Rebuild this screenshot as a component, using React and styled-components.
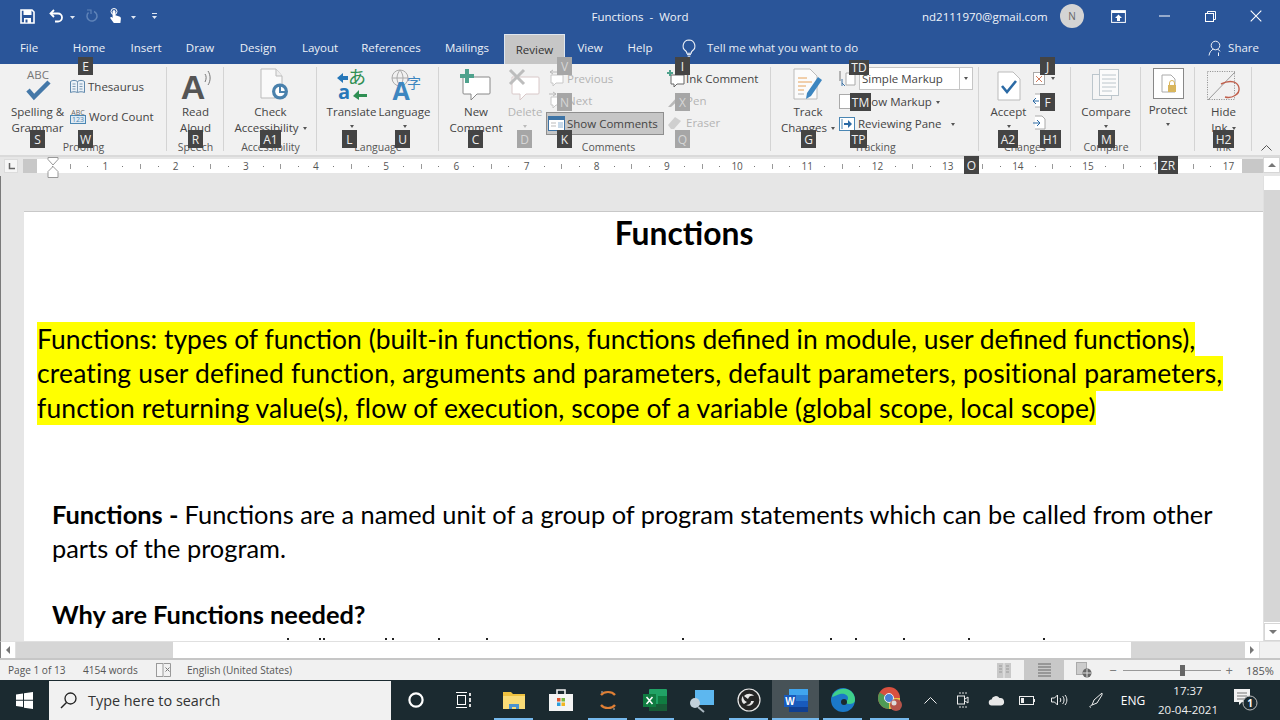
import React from "react";
import styled, { createGlobalStyle } from "styled-components";

const Global = createGlobalStyle`
  html, body { margin: 0; padding: 0; width: 1280px; height: 720px; overflow: hidden; background: #f1f1f1; }
  * { box-sizing: border-box; }
`;

const UI = `"Open Sans", "Noto Sans", "Liberation Sans", sans-serif`;

const Window = styled.div`
  position: relative; width: 1280px; height: 720px; overflow: hidden;
  display: flex; flex-direction: column; font-family: ${UI}; font-size: 11.5px; color: #444;
`;

/* ---------- title bar ---------- */
const TitleBar = styled.header`
  height: 32px; flex: none; background: #2a5599; color: #fff; display: flex; align-items: center;
  font-size: 11.5px; position: relative;
`;
const Quick = styled.div`display: flex; align-items: center; padding-left: 20px; width: 300px; flex: none;`;
const Q = styled.span`display: inline-flex; align-items: center; justify-content: center; width: ${p => p.$w}px; height: 20px; flex: none;`;
const DocTitle = styled.div`flex: 1; text-align: center; margin-left: 58px; white-space: pre; font-size: 11.5px; color: #eef2f8;`;
const Account = styled.div`width: 358px; display: flex; align-items: center; flex: none;`;
const Email = styled.span`font-size: 11.5px; width: 138px; flex: none; color: #f0f4fa; white-space: nowrap;`;
const Avatar = styled.span`
  width: 24px; height: 24px; flex: none; border-radius: 50%; background: #d4d4d4; color: #666; font-size: 10px;
  display: flex; align-items: center; justify-content: center; margin-right: 11px;
`;
const WinBtn = styled.span`width: ${p => p.$w || 46}px; flex: none; display: flex; justify-content: center; align-items: center;`;

/* ---------- tabs ---------- */
const TabBar = styled.nav`height: 32px; flex: none; background: #2a5599; display: flex; align-items: flex-end;`;
const Tab = styled.span`
  width: ${p => p.$w}px; height: ${p => (p.$active ? 30 : 32)}px; display: flex; align-items: center; justify-content: center;
  color: ${p => (p.$active ? "#333" : "#edf1f7")}; font-size: 11.5px; flex: none;
  background: ${p => (p.$active ? "#c6c6c6" : "transparent")};
  padding-bottom: ${p => (p.$active ? 0 : 1)}px;
  ${p => (p.$active ? "border: 1px solid #dfe6ee; border-bottom: 0;" : "")}
`;
const TellMe = styled.div`display: flex; align-items: center; gap: 11px; margin-left: 17px; color: #e8edf5; height: 32px; font-size: 11.5px; flex: 1; padding-bottom: 1px;`;
const Share = styled.div`display: flex; align-items: center; gap: 6px; height: 32px; color: #e8edf5; padding-right: 21px; font-size: 11.5px; padding-bottom: 1px;`;

/* ---------- ribbon ---------- */
const Ribbon = styled.section`height: 93px; flex: none; background: #f1f1f1; display: flex; border-bottom: 2px solid #dadada; position: relative;`;
const Group = styled.div`
  width: ${p => p.$w}px; flex: none; position: relative; display: flex; flex-direction: column; padding-top: 3px;
  &::after { content: ""; position: absolute; right: 0; top: 3px; bottom: 4px; width: 1px; background: #d4d4d4; }
`;
const GroupBody = styled.div`flex: 1; display: flex; align-items: flex-start; justify-content: ${p => p.$j || "flex-start"}; padding-left: ${p => p.$pl || 0}px; min-height: 0;`;
const GroupLabel = styled.div`height: 15px; line-height: 15px; text-align: center; font-size: 10.5px; color: #555; padding-left: ${p => p.$pl || 0}px;`;
const Big = styled.div`
  width: ${p => p.$w}px; flex: none; display: flex; flex-direction: column; align-items: center; text-align: center;
  line-height: 16px; color: ${p => (p.$off ? "#b4b4b4" : "#444")}; white-space: nowrap;
`;
const BigIcon = styled.div`height: ${p => p.$h || 34}px; margin-bottom: 3px; display: flex; align-items: flex-end; justify-content: center;`;
const Caret = styled.span`
  display: inline-block; width: 0; height: 0; border: 2.5px solid transparent; border-top: 3px solid ${p => (p.$off ? "#bbb" : "#555")}; border-bottom: 0;
  margin-left: ${p => p.$ml ?? 4}px; vertical-align: middle;
`;
const CaretLine = styled.div`height: 12px; display: flex; align-items: center; justify-content: center;`;
const Small = styled.div`display: flex; flex-direction: column; width: ${p => p.$w}px; padding-top: ${p => p.$pt || 0}px; gap: ${p => p.$gap || 0}px; margin-left: ${p => p.$ml || 0}px; flex: none;`;
const SmallRow = styled.div`
  height: ${p => p.$h || 22}px; display: flex; align-items: center; gap: ${p => p.$gap ?? 3}px; white-space: nowrap; padding-left: ${p => p.$pl || 0}px;
  color: ${p => (p.$off ? "#b4b4b4" : "#444")};
  ${p => (p.$on ? "background: #c6c6c6; outline: 1px solid #8e8e8e; outline-offset: -1px; margin-top: 1px;" : "")}
`;
const MarkupBox = styled.div`
  height: 23px; width: 114px; margin-left: 3px; border: 1px solid #c6c6c6; background: #fff; display: flex; align-items: center;
  padding-left: 2px; justify-content: space-between; color: #444; flex: none;
`;
const MarkupArrow = styled.span`width: 13px; height: 21px; border-left: 1px solid #c6c6c6; display: flex; align-items: center; justify-content: center;`;
const Collapse = styled.div`flex: 1; display: flex; align-items: flex-end; justify-content: center; padding-bottom: 4px;`;

const KeyTip = styled.span`
  position: absolute; left: ${p => p.$x}px; top: ${p => p.$y}px; width: ${p => p.$w || 15}px; height: ${p => p.$h || 18}px;
  background: ${p => (p.$off ? "#a6a6a6" : "#444")}; color: ${p => (p.$off ? "#d6d6d6" : "#f0f0f0")};
  font-size: 12px; display: flex; align-items: center; justify-content: center; z-index: 5;
`;

/* ---------- ruler ---------- */
const RulerRow = styled.div`height: 19px; flex: none; background: #e6e6e6; display: flex; align-items: flex-start; position: relative;`;
const TabStop = styled.div`width: 14px; height: 14px; margin: 2px 5px 0 4px; background: #f6f6f6; border: 1px solid #dcdcdc; display: flex; align-items: center; justify-content: center; flex: none;`;
const RulerMargin = styled.div`width: ${p => p.$w}px; height: 14px; margin-top: 2px; background: #c8c8c8; flex: none;`;
const RulerTrack = styled.div`width: 1205px; height: 14px; margin-top: 2px; background: #fff; display: flex; padding-left: 7px; overflow: hidden; flex: none;`;
const RulerCell = styled.div`width: 70.2px; flex: none; display: grid; grid-template-columns: repeat(4, 1fr); align-items: center; justify-items: center; font-size: 10px; color: #555;`;
const RDot = styled.i`width: 1px; height: 1px; background: #777; display: block;`;
const RTick = styled.i`width: 1px; height: 5px; background: #999; display: block;`;
const IndentMark = styled.span`position: absolute; left: ${p => p.$x}px; top: ${p => p.$y}px;`;
const ScrollBtn = styled.div`
  width: 17px; height: ${p => p.$h || 16}px; background: #fff; border: 1px solid #d6d6d6; flex: none;
  display: flex; align-items: center; justify-content: center;
`;
const TriUp = styled.span`width: 0; height: 0; border: 4px solid transparent; border-bottom: 4px solid #777; border-top: 0;`;
const TriDown = styled.span`width: 0; height: 0; border: 4px solid transparent; border-top: 4px solid #777; border-bottom: 0;`;
const TriLeft = styled.span`width: 0; height: 0; border: 4px solid transparent; border-right: 4px solid #777; border-left: 0;`;
const TriRight = styled.span`width: 0; height: 0; border: 4px solid transparent; border-left: 4px solid #777; border-right: 0;`;

/* ---------- document ---------- */
const DocRow = styled.div`height: 465px; flex: none; display: flex; background: #e6e6e6; border-left: 1px solid #7a7a7a;`;
const Viewport = styled.div`flex: 1; padding: 35px 0 0 23px; overflow: hidden; display: flex;`;
const Page = styled.article`
  flex: 1; background: #fff; border-top: 1px solid #c8c8c8; padding: 0 0 0 13px; color: #000; overflow: hidden;
  font-family: Lato, "Open Sans", sans-serif;
`;
const DocTitleText = styled.h1`margin: 0 0 0 68px; text-align: center; font-size: 31.8px; font-weight: 700; line-height: 42px; height: 44px;`;
const HighlightBlock = styled.div`margin-top: 66px; font-size: 26.46px; line-height: 34.4px;`;
const HL = styled.div`background: #ffff00; width: fit-content; white-space: nowrap; height: 34.4px; letter-spacing: ${p => p.$ls || 0}px;`;
const Para = styled.p`margin: 72px 0 0 15px; font-size: 25.4px; line-height: 34px; white-space: nowrap;`;
const Heading = styled.h2`margin: 32px 0 0 15px; font-size: 25.4px; line-height: 34px; font-weight: 700; white-space: nowrap;`;
const Specks = styled.svg`display: block; margin-top: 7px;`;

const VScroll = styled.div`width: 17px; flex: none; display: flex; flex-direction: column; background: #fff; border-left: 1px solid #e0e0e0;`;
const VThumb = styled.div`height: 432px; margin-top: 14px; background: #d6d6d6;`;
const VFill = styled.div`flex: 1;`;

const HScroll = styled.div`height: 17px; flex: none; display: flex; background: #fff; border-top: 1px solid #e0e0e0; border-left: 1px solid #7a7a7a;`;
const HBtn = styled.div`width: 15px; display: flex; align-items: center; justify-content: center; flex: none; border-right: 1px solid #e0e0e0;`;
const HThumb = styled.div`width: ${p => p.$w}px; background: #d6d6d6; flex: none;`;
const HTrack = styled.div`width: ${p => p.$w}px; flex: none;`;
const HCorner = styled.div`flex: 1; background: #f1f1f1;`;

/* ---------- status bar ---------- */
const Status = styled.footer`
  height: 22px; flex: none; background: #f1f1f1; border-top: 2px solid #c6c6c6; display: flex; align-items: center; font-size: 10.1px; color: #555;
`;
const StatusText = styled.span`margin-left: ${p => p.$ml}px; white-space: nowrap; width: ${p => p.$w}px; flex: none;`;
const StatusRight = styled.div`margin-left: auto; display: flex; align-items: center; height: 20px;`;
const ViewBtn = styled.div`width: ${p => p.$w}px; height: 20px; display: flex; align-items: center; justify-content: center; background: ${p => (p.$on ? "#c8c8c8" : "transparent")}; flex: none;`;
const Zoom = styled.div`display: flex; align-items: center; gap: 4px; margin-left: 5px; color: #777; font-size: 13px;`;
const ZoomTrack = styled.div`width: 98px; height: 1px; background: #999; position: relative; margin: 0 1px 0 2px;`;
const ZoomThumb = styled.span`position: absolute; left: 57px; top: -5px; width: 5px; height: 11px; background: #666;`;
const ZoomPct = styled.span`font-size: 11px; color: #555; margin: 0 7px 0 13px; width: 27px;`;

/* ---------- taskbar ---------- */
const Taskbar = styled.div`height: 40px; flex: none; background: #1b2a30; display: flex; align-items: stretch; color: #fff;`;
const Start = styled.div`width: 49px; flex: none; display: flex; align-items: center; justify-content: center;`;
const Search = styled.div`width: 342px; flex: none; margin-top: 1px; background: #f1f1f1; display: flex; align-items: center; gap: 11px; padding-left: 11px; color: #333; font-size: 14.4px;`;
const TaskCell = styled.div`
  width: ${p => p.$w || 47}px; flex: none; display: flex; align-items: center; justify-content: center; position: relative;
  background: ${p => (p.$active ? "#475257" : "transparent")};
  ${p => (p.$open ? `&::after { content: ""; position: absolute; bottom: 0; left: ${p.$active ? 0 : 4}px; right: ${p.$active ? 0 : 4}px; height: 2px; background: #76b9ed; }` : "")}
`;
const Spacer = styled.div`width: ${p => p.$w}px; flex: none;`;
const Tray = styled.div`width: ${p => p.$w}px; flex: none; display: flex; align-items: center; justify-content: center; font-size: 12px;`;
const Clock = styled.div`width: 78px; flex: none; text-align: center; line-height: 19px; font-size: 11.5px; color: #f0f0f0; white-space: nowrap; padding-top: 1px;`;

/* ---------- icons ---------- */
const S = ({ w, h, vb, children }) => (
  <svg width={w} height={h} viewBox={vb || `0 0 ${w} ${h}`} style={{ display: "block", flex: "none", overflow: "visible" }}>{children}</svg>
);
const SaveIcon = () => (
  <S w={15} h={15}>
    <path d="M1 1h11l2 2v11H1z" fill="none" stroke="#fff" strokeWidth="1.6" />
    <rect x="3.5" y="1" width="8" height="5" fill="#fff" />
    <rect x="4" y="9" width="7" height="5" fill="#fff" /><rect x="5.5" y="10.5" width="2" height="3" fill="#2a5599" />
  </S>
);
const UndoIcon = () => (
  <S w={15} h={14}>
    <path d="M5 1 1.5 4.5 5 8" fill="none" stroke="#fff" strokeWidth="1.8" />
    <path d="M2 4.5h7a4 4 0 0 1 0 8H6" fill="none" stroke="#fff" strokeWidth="1.8" />
  </S>
);
const RedoIcon = () => (
  <S w={14} h={14}>
    <path d="M9 2.5a5 5 0 1 1-5.5 1" fill="none" stroke="#5f83b8" strokeWidth="1.5" /><path d="M2 1h4v4" fill="none" stroke="#5f83b8" strokeWidth="1.2" />
  </S>
);
const TouchIcon = () => (
  <S w={13} h={16}>
    <circle cx="5" cy="3.5" r="3" fill="none" stroke="#fff" strokeWidth="1" />
    <path d="M3.6 3.5c0-1.8 2.8-1.8 2.8 0v3.7l4 1.2c1.6.5 1.6 1.5 1.4 3L11.4 15H4.8L1.5 10.5c-.7-1.2.6-2 1.4-1.2l.7.7z" fill="#fff" />
  </S>
);
const DropArrow = ({ c = "#dfe7f2", bar }) => (
  <S w={7} h={7}>
    {bar && <rect x="1" y="0" width="5" height="1" fill={c} />}
    <path d="M1 3h5L3.5 6z" fill={c} />
  </S>
);
const DisplayOpts = () => (
  <S w={15} h={13}>
    <rect x=".6" y=".6" width="13.8" height="11.8" fill="none" stroke="#fff" />
    <rect x="1" y="1" width="13" height="2" fill="#fff" /><path d="M7.5 4.5 11 8H9v3H6V8H4z" fill="#fff" />
  </S>
);
const MinIcon = () => <S w={11} h={2}><rect width="11" height="1" y=".5" fill="#fff" /></S>;
const RestoreIcon = () => (
  <S w={11} h={11}>
    <rect x=".5" y="2.5" width="8" height="8" fill="none" stroke="#fff" /><path d="M2.5 2.5v-2h8v8h-2" fill="none" stroke="#fff" />
  </S>
);
const CloseIcon = () => <S w={12} h={12}><path d="M.7.7l10.6 10.6M11.3.7.7 11.3" stroke="#fff" strokeWidth="1.1" /></S>;
const BulbIcon = () => (
  <S w={14} h={18}>
    <path d="M7 1a6 6 0 0 1 3.2 11c-.7.6-1 1.4-1 2.2H4.8c0-.8-.3-1.6-1-2.2A6 6 0 0 1 7 1z" fill="none" stroke="#f1f4f9" strokeWidth="1.1" />
    <path d="M5 15.6h4M5.7 17.2h2.6" stroke="#f1f4f9" />
  </S>
);
const PersonIcon = () => (
  <S w={14} h={16}>
    <circle cx="7.5" cy="5.5" r="4.3" fill="none" stroke="#eef2f8" /><path d="M1 15.5c.5-3.5 2.6-5.7 4.5-6.5M9.5 9.2c1.2.5 2 1.2 2.6 2.2M10.5 12.5v3.5" fill="none" stroke="#eef2f8" />
  </S>
);

const Blue = "#2b6aa5";
const SpellIcon = () => (
  <S w={30} h={32}>
    <text x="15" y="10" textAnchor="middle" fontSize="11.5" fill="#777" fontFamily={UI}>ABC</text>
    <path d="M5 21l6 7L26 13" fill="none" stroke="#4478a8" strokeWidth="4.5" />
  </S>
);
const Thesaurus = () => (
  <S w={15} h={14}>
    <path d="M.5 2.5c2-1.5 5-1.5 7 0 2-1.5 5-1.5 7 0v11c-2-1-5-1-7 0-2-1-5-1-7 0z" fill="#eaf1f7" stroke="#5f88ac" />
    <path d="M7.5 2.5v11M2.5 5h3M2.5 7.5h3M2.5 10h3M9.5 5h3M9.5 7.5h3M9.5 10h3" stroke="#7d9ab5" />
  </S>
);
const WordCount = () => (
  <S w={16} h={16}>
    <text x="8" y="6.5" textAnchor="middle" fontSize="7" fill="#666" fontFamily={UI}>ABC</text>
    <rect x=".5" y="7.5" width="15" height="8" fill="#dfeaf3" stroke="#4b87b3" />
    <text x="8" y="14.3" textAnchor="middle" fontSize="7" fill="#4b87b3" fontFamily={UI}>123</text>
  </S>
);
const ReadAloud = () => (
  <S w={30} h={34}>
    <text x="12" y="32" textAnchor="middle" fontSize="34" fontWeight="700" fill="#555" fontFamily={`"Liberation Sans", sans-serif`}>A</text>
    <path d="M24 7c1.5 2 1.5 5 0 8M27 4c2.8 4 2.8 10 0 14" fill="none" stroke="#777" />
  </S>
);
const CheckAcc = () => (
  <S w={30} h={33}>
    <path d="M5 1h15l6 7v22H5z" fill="#fafafa" stroke="#bbb" /><path d="M20 1v7h6" fill="#eee" stroke="#bbb" />
    <circle cx="24" cy="23.5" r="8" fill="#4a81ac" /><circle cx="24" cy="23.5" r="4.8" fill="#fff" /><path d="M23 17h2v6h6v2h-8z" fill="#4a81ac" />
  </S>
);
const TranslateIcon = () => (
  <S w={30} h={32}>
    <text x="20" y="15" textAnchor="middle" fontSize="18" fill="#2f8f53" fontFamily={`"Noto Sans CJK JP", sans-serif`}>あ</text>
    <path d="M0 9l6-5v3h5v4H6v3z" fill="#2677b9" />
    <text x="7" y="30" textAnchor="middle" fontSize="20" fontWeight="700" fill="#2677b9" fontFamily={UI}>a</text>
    <path d="M30 25l-8 0v-4l-6 6 6 4v-3h8z" fill="#2f8f53" />
  </S>
);
const LanguageIcon = () => (
  <S w={32} h={32}>
    <circle cx="11" cy="9" r="8" fill="none" stroke="#aaa" /><path d="M3 9h16M11 1c-4 5-4 11 0 16M11 1c4 5 4 11 0 16" fill="none" stroke="#aaa" />
    <text x="12" y="31" textAnchor="middle" fontSize="25" fontWeight="700" fill="#3d86c0" fontFamily={UI}>A</text>
    <text x="25" y="19" textAnchor="middle" fontSize="14" fill="#3d86c0" fontFamily={`"Noto Sans CJK SC", sans-serif`}>字</text>
  </S>
);
const Bubble = ({ c = "#888" }) => <path d="M3 8h26a1 1 0 0 1 1 1v15a1 1 0 0 1-1 1H17l-6 6v-6H4a1 1 0 0 1-1-1V8z" fill="#fff" stroke={c} />;
const NewComment = () => (
  <S w={32} h={32}>
    <Bubble />
    <path d="M5 0h4v5h5v4H9v5H5V9H0V5h5z" fill="#4fa28d" />
  </S>
);
const DeleteComment = () => (
  <S w={32} h={32}>
    <Bubble c="#d8c8c8" />
    <path d="M1 1l14 14M15 1 1 15" stroke="#bdbdbd" strokeWidth="3" />
  </S>
);
const MiniBubble = ({ arrow }) => (
  <S w={16} h={16}>
    <path d="M3 5h12v8H8l-3 3v-3H3z" fill="#fff" stroke="#c8c8c8" />
    <path d={arrow} fill="none" stroke="#b8b8b8" />
  </S>
);
const ShowComments = () => (
  <S w={17} h={15}>
    <rect x=".5" y=".5" width="16" height="14" fill="#fff" stroke="#3d73a5" />
    <rect x="1" y="1" width="15" height="3" fill="#3d73a5" />
    <path d="M3 7h5M3 10h5" stroke="#bbb" /><rect x="10" y="6" width="5" height="6" fill="#c7d9e9" />
  </S>
);
const InkComment = () => (
  <S w={18} h={17}>
    <path d="M4 5h13v9H10l-3 3v-3H4z" fill="#fff" stroke="#666" /><path d="M3 0v6M0 3h6" stroke="#4fa28d" strokeWidth="2" />
  </S>
);
const PenIcon = () => <S w={15} h={15}><path d="M1 14 11 3l3 2L4 14z" fill="#b9b9b9" /></S>;
const EraserIcon = () => <S w={15} h={14}><path d="M1 9l7-8 6 4-7 8H4z" fill="#cfcfcf" /></S>;
const TrackIcon = () => (
  <S w={30} h={33}>
    <path d="M1 1h16l7 7v23H1z" fill="#fbfbfb" stroke="#bbb" />
    <path d="M5 10h9M5 14h14M5 18h8M5 22h6" stroke="#e6a25b" /><path d="M5 26h6" stroke="#b0b0b0" />
    <path d="M25 9l4 3-11 16-5 3 1-6z" fill="#3d86c0" />
  </S>
);
const MiniDoc = () => (
  <S w={17} h={17}>
    <path d="M7 3h7l2 2v10H7z" fill="#fff" stroke="#aaa" /><path d="M1 1v10" stroke="#777" /><path d="M3 13l3 3M3 9v7" stroke="#3d73a5" />
  </S>
);
const MiniDoc2 = () => <S w={17} h={17}><rect x=".5" y="1.5" width="15" height="14" fill="#fff" stroke="#aaa" /></S>;
const ReviewPane = () => (
  <S w={16} h={14}>
    <rect x=".5" y=".5" width="15" height="13" fill="#fff" stroke="#4a86b3" />
    <path d="M3 2v10" stroke="#4a86b3" /><path d="M5 6h4V3l4 4-4 4V8H5z" fill="#2b6aa5" />
  </S>
);
const AcceptIcon = () => (
  <S w={24} h={30}>
    <path d="M1 1h15l7 7v21H1z" fill="#fff" stroke="#bbb" /><path d="M5 15l5 6 9-11" fill="none" stroke={Blue} strokeWidth="2.6" />
  </S>
);
const RejectIcon = () => (
  <S w={13} h={13}>
    <rect x=".5" y=".5" width="11" height="12" fill="#fff" stroke="#aaa" /><path d="M3 4l6 6M9 4l-6 6" stroke="#d27b5c" />
  </S>
);
const PrevChange = () => (
  <S w={13} h={15}>
    <path d="M2 1h7l3 3v10H2" fill="#fff" stroke="#aaa" /><path d="M0 8h6M0 8l3-3M0 8l3 3" stroke={Blue} />
  </S>
);
const NextChange = () => (
  <S w={13} h={15}>
    <path d="M2 1h7l3 3v10H2" fill="#fff" stroke="#aaa" /><path d="M0 8h7M7 8 4 5M7 8l-3 3" stroke={Blue} />
  </S>
);
const CompareIcon = () => (
  <S w={28} h={32}>
    <rect x=".5" y="5.5" width="19" height="25" fill="#f5f5f5" stroke="#bcc6cc" />
    <rect x="7.5" y=".5" width="19" height="26" fill="#fbfbfb" stroke="#bcc6cc" />
    <path d="M10 6h14M10 10h14M10 14h14M10 18h14M10 22h10" stroke="#bcc6cc" />
  </S>
);
const ProtectIcon = () => (
  <S w={31} h={31}>
    <rect x=".5" y=".5" width="30" height="30" fill="#fff" stroke="#888" />
    <path d="M9 7h9l4 4v13H9z" fill="#fff" stroke="#aaa" /><rect x="15" y="17" width="8" height="7" fill="#d9b65d" /><path d="M16.5 17v-2a2.5 2.5 0 0 1 5 0v2" fill="none" stroke="#d9b65d" />
  </S>
);
const HideInk = () => (
  <S w={33} h={30}>
    <rect x=".5" y=".5" width="27" height="28" fill="none" stroke="#888" strokeDasharray="1 1.4" />
    <path d="M1 29 28 1" stroke="#999" />
    <path d="M14 13c10-5 17-2 18 4s-7 11-14 9" fill="none" stroke="#c0604d" strokeWidth="1.4" />
  </S>
);
const ChevUp = () => <S w={11} h={6}><path d="M.5 5.5l5-5 5 5" fill="none" stroke="#555" /></S>;

const Hourglass = () => (
  <S w={12} h={21}>
    <path d="M1 .5h10v2L6 8 1 2.5z" fill="#fff" stroke="#999" /><path d="M6 9.5l5 5V20.5H1V14.5z" fill="#fff" stroke="#999" />
  </S>
);
const TabCorner = () => <S w={7} h={7}><path d="M1.5 0v5.5H7" fill="none" stroke="#666" strokeWidth="1.5" /></S>;

const ProofIcon = () => (
  <S w={15} h={14}>
    <rect x=".5" y=".5" width="6.5" height="13" fill="#f5f5f5" stroke="#999" /><path d="M8 .5h6.5v13H8" fill="none" stroke="#999" /><path d="M9.5 4.5l4 4M13.5 4.5l-4 4" stroke="#777" />
  </S>
);
const ReadView = () => (
  <S w={14} h={15}>
    <rect width="14" height="15" fill="#c9c9c9" /><path d="M7 0v15" stroke="#eee" /><path d="M2 3h3M2 6h3M2 9h3M9 3h3M9 6h3M9 9h3" stroke="#999" />
  </S>
);
const PrintView = () => (
  <S w={13} h={14}>
    <path d="M0 1h13M0 4h13M0 7h13M0 10h13M0 13h13" stroke="#666" />
  </S>
);
const WebView = () => (
  <S w={16} h={16}>
    <rect x=".5" y=".5" width="10" height="12" fill="#ccc" stroke="#aaa" /><circle cx="11" cy="11" r="4.5" fill="#666" /><path d="M7 11h8M11 7v8" stroke="#ddd" />
  </S>
);

const WinLogo = () => (
  <S w={17} h={17}><path d="M0 2.4 7 1.4v6.3H0zM8 1.2 17 0v7.7H8zM0 8.7h7V15L0 14.1zM8 8.7h9V17l-9-1.2z" fill="#fff" /></S>
);
const Magnifier = () => (
  <S w={17} h={17}><circle cx="10.5" cy="6.5" r="5.5" fill="none" stroke="#222" strokeWidth="1.3" /><path d="M6.5 10.5 1 16" stroke="#222" strokeWidth="1.5" /></S>
);
const Cortana = () => <S w={16} h={16}><circle cx="8" cy="8" r="6.6" fill="none" stroke="#fff" strokeWidth="2.2" /></S>;
const TaskView = () => (
  <S w={17} h={16}>
    <path d="M0 .5h11M0 15.5h11" stroke="#fff" /><rect x="1.5" y="3.5" width="8" height="9" fill="none" stroke="#fff" /><path d="M14 1v3M14 6v4M14 12v3" stroke="#ddd" strokeWidth="2" />
  </S>
);
const Explorer = () => (
  <S w={22} h={19}>
    <path d="M0 1h8l2 2h12v15H0z" fill="#efc13f" /><rect y="5" width="22" height="13" fill="#fadb76" /><path d="M6 18v-5h10v5h-3v-2H9v2z" fill="#4d92cf" />
  </S>
);
const Store = () => (
  <S w={24} h={24}>
    <path d="M8 6V2h8v4" fill="none" stroke="#f2f2f2" strokeWidth="1.6" /><rect y="6" width="24" height="17" fill="#f4f4f4" />
    <rect x="8" y="10" width="3.5" height="3.5" fill="#e2532d" /><rect x="12.5" y="10" width="3.5" height="3.5" fill="#78b83f" />
    <rect x="8" y="14.5" width="3.5" height="3.5" fill="#2c9fdc" /><rect x="12.5" y="14.5" width="3.5" height="3.5" fill="#f2b51f" />
  </S>
);
const Ring = () => (
  <S w={18} h={22}>
    <path d="M2 6c3-4 11-4 14 0M2 16c3 4 11 4 14 0" fill="none" stroke="#df7f35" strokeWidth="2.2" /><circle cx="3" cy="3" r="1" fill="#888" /><circle cx="15" cy="20" r="1" fill="#888" />
  </S>
);
const Excel = () => (
  <S w={24} h={22}>
    <rect x="6" width="18" height="22" rx="1" fill="#21a366" /><rect x="15" y="7" width="9" height="8" fill="#107c41" /><rect x="6" y="15" width="18" height="7" fill="#185c37" />
    <rect y="5" width="13" height="13" fill="#107c41" />
    <path d="M3.5 8l6 7M9.5 8l-6 7" stroke="#fff" strokeWidth="1.6" />
  </S>
);
const RemoteIcon = () => (
  <S w={25} h={23}>
    <rect x="6" y="1" width="19" height="15" fill="#5db7ef" />
    <circle cx="6" cy="14" r="5" fill="#c3d0d9" /><path d="M9 18l6 5" stroke="#a9b6bf" strokeWidth="2" />
  </S>
);
const Obs = () => (
  <S w={24} h={24}>
    <circle cx="12" cy="12" r="11" fill="#252525" stroke="#e8e8e8" strokeWidth="1.2" />
    <path d="M7 8c3-3 8-3 10 0-3-1-5 0-6 3M17 13c-1 4-5 6-8 4 2 0 5-1 5-4M7 16c-3-2-3-6-1-8 0 2 1 5 4 6" fill="#e8e8e8" />
  </S>
);
const WordIcon = () => (
  <S w={24} h={23}>
    <rect x="5" width="19" height="6" fill="#41a5ee" /><rect x="5" y="6" width="19" height="6" fill="#2b7cd3" /><rect x="5" y="12" width="19" height="6" fill="#185abd" /><rect x="5" y="18" width="19" height="5" fill="#103f91" />
    <rect y="6" width="12" height="12" fill="#185abd" />
    <text x="6" y="16" textAnchor="middle" fontSize="10" fontWeight="700" fill="#fff" fontFamily={`"Liberation Sans", sans-serif`}>W</text>
  </S>
);
const Edge = () => (
  <S w={24} h={24}>
    <circle cx="12" cy="12" r="12" fill="#1b78c8" />
    <path d="M1 9C3 2 12-1 18 2c4 2 6 6 6 10 0 3-3 4-6 4-2 0-4-1-4-3 2 0 3-1 3-3 0-3-4-5-8-4-4 1-7 3-8 3z" fill="#3fd08a" />
    <circle cx="13" cy="14" r="3" fill="#1b2a30" />
  </S>
);
const Chrome = () => (
  <S w={26} h={28}>
    <circle cx="12" cy="12" r="11" fill="#d9503f" />
    <path d="M12 12 2.5 6.5A11 11 0 0 0 12 23z" fill="#4f9a55" /><path d="M12 12v11A11 11 0 0 0 23 12z" fill="#e8c54a" />
    <circle cx="12" cy="12" r="4.5" fill="#4a7fd6" stroke="#eee" />
    <circle cx="19" cy="19" r="6" fill="#b5544a" /><circle cx="17" cy="17" r="2.5" fill="#ddd" />
  </S>
);
const TrayUp = () => <S w={13} h={8}><path d="M.5 7.5l6-6 6 6" fill="none" stroke="#eee" /></S>;
const MeetIcon = () => (
  <S w={12} h={18}>
    <path d="M2 2h8M2 16h8" stroke="#ddd" strokeDasharray="2 1" /><rect x=".5" y="5" width="7" height="8" fill="none" stroke="#eee" /><path d="M8 8l3-2v6l-3-2" fill="none" stroke="#eee" />
  </S>
);
const Cloud = () => <S w={17} h={11}><path d="M4 10.5a3 3 0 0 1-.5-6A4.5 4.5 0 0 1 11.5 3 3.7 3.7 0 0 1 13 10.5z" fill="#e8e8e8" /></S>;
const Battery = () => (
  <S w={16} h={9}><rect x=".5" y=".5" width="14" height="8" fill="none" stroke="#eee" /><rect x="2" y="2" width="3" height="5" fill="#eee" /><rect x="15" y="3" width="1" height="3" fill="#eee" /></S>
);
const Speaker = () => (
  <S w={16} h={12}><path d="M.5 4h3l3-3v10l-3-3h-3z" fill="none" stroke="#eee" /><path d="M9 4c1 1 1 3 0 4M11.5 2c2 2 2 6 0 8M14 1c2.5 3 2.5 7 0 10" fill="none" stroke="#eee" /></S>
);
const PenTray = () => (
  <S w={14} h={16}><path d="M13 1 5 8 3 13l5-2 5-8zM3 13c-2 1-3 2-1.5 2.5" fill="none" stroke="#eee" /></S>
);
const Notif = () => (
  <S w={25} h={22}>
    <path d="M0 0h16v13H8l-3 3v-3H0z" fill="#f2f2f2" /><path d="M3 4h10M3 7h10M3 10h10" stroke="#777" />
    <circle cx="16" cy="14" r="7" fill="#1b2a30" stroke="#bbb" />
    <text x="16" y="18" textAnchor="middle" fontSize="10" fontWeight="700" fill="#fff" fontFamily={UI}>1</text>
  </S>
);

const tabs = [["File", 58], ["Home", 62], ["Insert", 52], ["Draw", 56], ["Design", 60], ["Layout", 64], ["References", 78], ["Mailings", 74], ["Review", 61, true], ["View", 50], ["Help", 50]];
const keyTips = [
  ["E", 78, 57], ["S", 30, 130], ["W", 78, 130], ["R", 188, 130], ["A1", 260, 130, 21], ["L", 342, 130], ["U", 395, 130],
  ["V", 557, 57, 15, 1], ["N", 557, 93, 15, 1], ["K", 557, 130], ["I", 675, 57], ["X", 675, 93, 15, 1], ["Q", 675, 130, 15, 1],
  ["C", 468, 130], ["D", 517, 130, 15, 1], ["G", 801, 130], ["TD", 849, 60, 20, 0, 15], ["TM", 850, 93, 21], ["TP", 850, 130, 17],
  ["J", 1040, 57], ["F", 1040, 93], ["A2", 998, 130, 20], ["H1", 1040, 130, 21], ["M", 1098, 130, 17], ["H2", 1213, 130, 21],
  ["O", 964, 156], ["ZR", 1158, 156, 20],
];
const rulerNums = Array.from({ length: 17 }, (_, i) => i + 1);
const speckXs = [287, 319, 323, 385, 392, 438, 486, 682, 830, 855, 903, 968, 1043];

export default function App() {
  return (
    <Window>
      <Global />
      <TitleBar>
        <Quick>
          <Q $w={15}><SaveIcon /></Q>
          <Q $w={14} />
          <Q $w={15}><UndoIcon /></Q>
          <Q $w={5} />
          <Q $w={7}><DropArrow /></Q>
          <Q $w={9} />
          <Q $w={14}><RedoIcon /></Q>
          <Q $w={10} />
          <Q $w={13}><TouchIcon /></Q>
          <Q $w={8} />
          <Q $w={7}><DropArrow /></Q>
          <Q $w={14} />
          <Q $w={7}><DropArrow bar /></Q>
        </Quick>
        <DocTitle>{"Functions  -  Word"}</DocTitle>
        <Account>
          <Email>nd2111970@gmail.com</Email>
          <Avatar>N</Avatar>
          <WinBtn $w={46}><DisplayOpts /></WinBtn>
          <WinBtn $w={46}><MinIcon /></WinBtn>
          <WinBtn $w={46}><RestoreIcon /></WinBtn>
          <WinBtn $w={46}><CloseIcon /></WinBtn>
        </Account>
      </TitleBar>

      <TabBar>
        {tabs.map(([t, w, a]) => <Tab key={t} $w={w} $active={a}>{t}</Tab>)}
        <TellMe><BulbIcon /><span>Tell me what you want to do</span></TellMe>
        <Share><PersonIcon /><span>Share</span></Share>
      </TabBar>

      <Ribbon>
        <Group $w={167}>
          <GroupBody $pl={5}>
            <Big $w={65}>
              <BigIcon><SpellIcon /></BigIcon>Spelling &amp;<br />Grammar
            </Big>
            <Small $w={95} $pt={8} $gap={8}>
              <SmallRow><Thesaurus /><span>Thesaurus</span></SmallRow>
              <SmallRow><WordCount /><span>Word Count</span></SmallRow>
            </Small>
          </GroupBody>
          <GroupLabel>Proofing</GroupLabel>
        </Group>
        <Group $w={57}>
          <GroupBody $j="center"><Big $w={56}><BigIcon><ReadAloud /></BigIcon>Read<br />Aloud</Big></GroupBody>
          <GroupLabel>Speech</GroupLabel>
        </Group>
        <Group $w={93}>
          <GroupBody $j="center"><Big $w={90}><BigIcon><CheckAcc /></BigIcon>Check<br /><span>Accessibility<Caret /></span></Big></GroupBody>
          <GroupLabel>Accessibility</GroupLabel>
        </Group>
        <Group $w={122}>
          <GroupBody $j="center">
            <Big $w={53}><BigIcon><TranslateIcon /></BigIcon>Translate<CaretLine><Caret $ml={0} /></CaretLine></Big>
            <Big $w={53}><BigIcon><LanguageIcon /></BigIcon>Language<CaretLine><Caret $ml={0} /></CaretLine></Big>
          </GroupBody>
          <GroupLabel>Language</GroupLabel>
        </Group>
        <Group $w={332}>
          <GroupBody $pl={11}>
            <Big $w={52}><BigIcon><NewComment /></BigIcon>New<br />Comment</Big>
            <Big $w={46} $off><BigIcon><DeleteComment /></BigIcon>Delete<CaretLine><Caret $ml={0} $off /></CaretLine></Big>
            <Small $w={118} $ml={-2}>
              <SmallRow $off $gap={3} $pl={2}><MiniBubble arrow="M5 0 2 2l3 2M2 2h7" /><span>Previous</span></SmallRow>
              <SmallRow $off $gap={3} $pl={2}><MiniBubble arrow="M5 0 8 2 5 4M1 2h7" /><span>Next</span></SmallRow>
              <SmallRow $on $gap={2} $pl={2} $h={23}><ShowComments /><span>Show Comments</span></SmallRow>
            </Small>
            <Small $w={100} $ml={3}>
              <SmallRow $gap={1}><InkComment /><span>Ink Comment</span></SmallRow>
              <SmallRow $off $gap={4}><PenIcon /><span>Pen</span></SmallRow>
              <SmallRow $off $gap={4} $h={23}><EraserIcon /><span>Eraser</span></SmallRow>
            </Small>
          </GroupBody>
          <GroupLabel $pl={7}>Comments</GroupLabel>
        </Group>
        <Group $w={208}>
          <GroupBody $pl={6}>
            <Big $w={62}><BigIcon><TrackIcon /></BigIcon>Track<br /><span>Changes<Caret /></span></Big>
            <Small $w={133}>
              <SmallRow $gap={0} $h={23}><MiniDoc /><MarkupBox><span>Simple Markup</span><MarkupArrow><Caret $ml={0} /></MarkupArrow></MarkupBox></SmallRow>
              <SmallRow $gap={2} $h={22}><MiniDoc2 /><span>Show Markup<Caret /></span></SmallRow>
              <SmallRow $gap={3} $h={23}><ReviewPane /><span>Reviewing Pane<Caret $ml={9} /></span></SmallRow>
            </Small>
          </GroupBody>
          <GroupLabel>Tracking</GroupLabel>
        </Group>
        <Group $w={92}>
          <GroupBody $pl={7}>
            <Big $w={45}><BigIcon><AcceptIcon /></BigIcon>Accept<CaretLine><Caret $ml={0} /></CaretLine></Big>
            <Small $w={30} $ml={2}>
              <SmallRow $gap={3}><RejectIcon /><Caret $ml={2} /></SmallRow>
              <SmallRow $gap={3}><PrevChange /></SmallRow>
              <SmallRow $gap={3}><NextChange /></SmallRow>
            </Small>
          </GroupBody>
          <GroupLabel>Changes</GroupLabel>
        </Group>
        <Group $w={70}>
          <GroupBody $j="center"><Big $w={60}><BigIcon><CompareIcon /></BigIcon>Compare<CaretLine><Caret $ml={0} /></CaretLine></Big></GroupBody>
          <GroupLabel>Compare</GroupLabel>
        </Group>
        <Group $w={54}>
          <GroupBody $j="center"><Big $w={52}><BigIcon $h={32}><ProtectIcon /></BigIcon>Protect<CaretLine><Caret $ml={0} /></CaretLine></Big></GroupBody>
          <GroupLabel />
        </Group>
        <Group $w={57}>
          <GroupBody $j="center"><Big $w={50}><BigIcon><HideInk /></BigIcon>Hide<br /><span>Ink<Caret /></span></Big></GroupBody>
          <GroupLabel>Ink</GroupLabel>
        </Group>
        <Collapse><ChevUp /></Collapse>
      </Ribbon>

      <RulerRow>
        <TabStop><TabCorner /></TabStop>
        <RulerMargin $w={14} />
        <RulerTrack>
          {rulerNums.map(n => (
            <RulerCell key={n}><RDot /><RTick /><RDot /><span>{n}</span></RulerCell>
          ))}
        </RulerTrack>
        <RulerMargin $w={21} />
        <ScrollBtn><TriUp /></ScrollBtn>
        <IndentMark $x={47} $y={0}><Hourglass /></IndentMark>
      </RulerRow>

      <DocRow>
        <Viewport>
          <Page>
            <DocTitleText>Functions</DocTitleText>
            <HighlightBlock>
              <HL>Functions: types of function (built-in functions, functions defined in module, user defined functions),</HL>
              <HL $ls={0.16}>creating user defined function, arguments and parameters, default parameters, positional parameters,</HL>
              <HL $ls={0.115}>function returning value(s), flow of execution, scope of a variable (global scope, local scope)</HL>
            </HighlightBlock>
            <Para>
              <strong>Functions - </strong>Functions are a named unit of a group of program statements which can be called from other<br />
              parts of the program.
            </Para>
            <Heading>Why are Functions needed?</Heading>
            <Specks width="1100" height="2">
              {speckXs.map(x => <rect key={x} x={x - 37} y="0" width="2" height="2" fill="#222" />)}
            </Specks>
          </Page>
        </Viewport>
        <VScroll>
          <VThumb />
          <VFill />
          <ScrollBtn $h={18}><TriDown /></ScrollBtn>
        </VScroll>
      </DocRow>

      <HScroll>
        <HBtn><TriLeft /></HBtn>
        <HThumb $w={157} />
        <HTrack $w={958} />
        <HThumb $w={114} />
        <HBtn><TriRight /></HBtn>
        <HCorner />
      </HScroll>

      <Status>
        <StatusText $ml={8} $w={57}>Page 1 of 13</StatusText>
        <StatusText $ml={18} $w={55}>4154 words</StatusText>
        <StatusText $ml={18} $w={15}><ProofIcon /></StatusText>
        <StatusText $ml={16} $w={110}>English (United States)</StatusText>
        <StatusRight>
          <ViewBtn $w={40}><ReadView /></ViewBtn>
          <ViewBtn $w={40} $on><PrintView /></ViewBtn>
          <ViewBtn $w={40}><WebView /></ViewBtn>
          <Zoom>
            <span>−</span>
            <ZoomTrack><ZoomThumb /></ZoomTrack>
            <span>+</span>
          </Zoom>
          <ZoomPct>185%</ZoomPct>
        </StatusRight>
      </Status>

      <Taskbar>
        <Start><WinLogo /></Start>
        <Search><Magnifier /><span>Type here to search</span></Search>
        <TaskCell $w={49}><Cortana /></TaskCell>
        <TaskCell $w={48}><TaskView /></TaskCell>
        <Spacer $w={2} />
        <TaskCell $open><Explorer /></TaskCell>
        <TaskCell><Store /></TaskCell>
        <TaskCell $open><Ring /></TaskCell>
        <TaskCell $open><Excel /></TaskCell>
        <TaskCell><RemoteIcon /></TaskCell>
        <TaskCell $open><Obs /></TaskCell>
        <TaskCell $open $active><WordIcon /></TaskCell>
        <TaskCell $open><Edge /></TaskCell>
        <TaskCell $open><Chrome /></TaskCell>
        <Spacer $w={2} />
        <Tray $w={30}><TrayUp /></Tray>
        <Tray $w={36}><MeetIcon /></Tray>
        <Tray $w={30}><Cloud /></Tray>
        <Tray $w={32}><Battery /></Tray>
        <Tray $w={32}><Speaker /></Tray>
        <Tray $w={42}><PenTray /></Tray>
        <Tray $w={32}>ENG</Tray>
        <Clock>17:37<br />20-04-2021</Clock>
        <Tray $w={38}><Notif /></Tray>
      </Taskbar>

      {keyTips.map(([t, x, y, w, off, h]) => <KeyTip key={t} $x={x} $y={y} $w={w} $off={off} $h={h}>{t}</KeyTip>)}
    </Window>
  );
}
